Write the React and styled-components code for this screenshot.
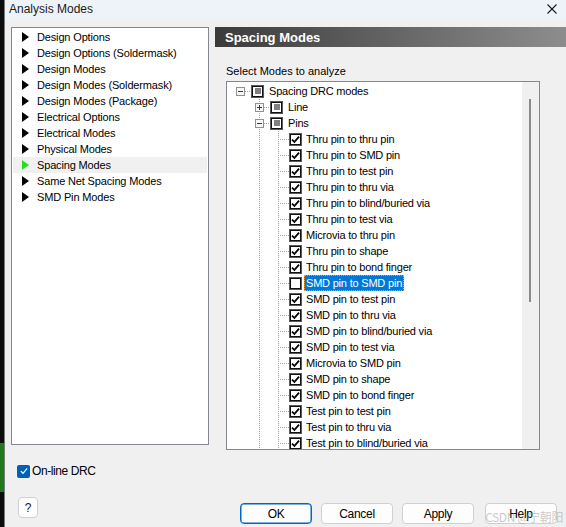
import React from 'react';
import styled, { createGlobalStyle, css } from 'styled-components';

const GlobalStyle = createGlobalStyle`
  html, body {
    margin: 0;
    padding: 0;
    background: #f0f0f0;
    overflow: hidden;
  }
  * { box-sizing: border-box; }
`;

const Screen = styled.div`
  display: flex;
  width: 566px;
  height: 527px;
  font-family: "Liberation Sans", Arial, sans-serif;
  color: #000;
`;

// dark desktop strip on the left edge, with a bit of green behind the dialog
const Edge = styled.div`
  width: 4px;
  flex-shrink: 0;
  background: linear-gradient(
    to bottom,
    #0c0c0c 0,
    #0c0c0c 443px,
    #1f7a1f 443px,
    #1f7a1f 492px,
    #0c0c0c 492px
  );
`;

const Window = styled.div`
  flex: 1;
  display: flex;
  flex-direction: column;
  border-left: 1px solid #7b7b7b;
  background: #f0f0f0;
`;

const TitleBar = styled.div`
  height: 20px;
  display: flex;
  align-items: center;
  justify-content: space-between;
  padding: 0 9px 3px 4px;
  background: #eef3f9;
`;

const Title = styled.span`
  font-size: 12px;
  color: #1a1a1a;
`;

const Body = styled.div`
  flex: 1;
  display: flex;
  flex-direction: column;
  padding-top: 7px;
  position: relative;
`;

const Main = styled.div`
  display: flex;
  align-items: flex-start;
`;

const LeftCol = styled.div`
  width: 204px;
  padding-left: 6px;
  display: flex;
  flex-direction: column;
`;

const ListBox = styled.div`
  height: 418px;
  background: #fff;
  border: 1px solid #828790;
  padding: 1px;
`;

const ListRow = styled.div`
  height: 16px;
  display: flex;
  align-items: center;
  padding-left: 9px;
  font-size: 11px;
  letter-spacing: -0.15px;
  white-space: nowrap;
  ${p => p.$selected && css`background: #f0f0f0;`}
`;

const Arrow = styled.span`
  width: 0;
  height: 0;
  border-top: 5.5px solid transparent;
  border-bottom: 5.5px solid transparent;
  border-left: 7px solid ${p => (p.$active ? '#22e022' : '#000')};
  margin-right: 8px;
`;

const OnlineRow = styled.label`
  display: flex;
  align-items: center;
  margin-top: 19px;
  margin-left: 6px;
  font-size: 12px;
  letter-spacing: -0.4px;
  gap: 2px;
`;

const WinCheck = styled.span`
  width: 13px;
  height: 13px;
  border-radius: 2px;
  background: #005fb8;
  display: flex;
  align-items: center;
  justify-content: center;
`;

const RightCol = styled.div`
  flex: 1;
  margin-left: 6px;
  display: flex;
  flex-direction: column;
`;

const Banner = styled.div`
  height: 20px;
  display: flex;
  align-items: center;
  padding-left: 10px;
  background: linear-gradient(to right, #3b3b3b, #8d8d8d);
  color: #fff;
  font-size: 13px;
  font-weight: bold;
`;

const FieldLabel = styled.div`
  margin: 17px 0 3px 11px;
  font-size: 11px;
  height: 14px;
  line-height: 14px;
`;

const TreeBox = styled.div`
  width: 314px;
  height: 369px;
  margin-left: 11px;
  border: 1px solid #828790;
  background: #fff;
  display: flex;
  overflow: hidden;
`;

const TreeRows = styled.div`
  flex: 1;
  padding-top: 1px;
  overflow: hidden;
`;

const TreeRow = styled.div`
  height: 16px;
  display: flex;
  align-items: center;
  font-size: 11px;
  letter-spacing: -0.2px;
  white-space: nowrap;
`;

const ItemLabel = styled.span`
  height: 16px;
  line-height: 15px;
  padding: 0 1px;
  margin-left: ${p => p.$gap}px;
  border: 1px solid transparent;
  ${p => p.$selected && css`
    background: #0078d7;
    color: #fff;
    border: 1px dotted #f0a030;
  `}
`;

const Box = styled.span`
  width: 13px;
  height: 13px;
  flex-shrink: 0;
  border: 1px solid #5a5a5a;
  box-shadow: inset 0 0 0 1px #111;
  background: #fff;
  display: flex;
  align-items: center;
  justify-content: center;
`;

const Partial = styled.span`
  width: 6px;
  height: 6px;
  background: #808080;
`;

const ScrollTrack = styled.div`
  width: 17px;
  flex-shrink: 0;
  background: #f0f0f0;
  padding: 17px 0 0 7px;
`;

const ScrollThumb = styled.div`
  width: 2px;
  height: 203px;
  background: #8b8b8b;
`;

const Footer = styled.div`
  display: flex;
  align-items: flex-start;
  margin-top: 19px;
  padding: 0 9px 0 13px;
`;

const QButton = styled.button`
  width: 20px;
  height: 21px;
  padding: 0;
  font-family: "Liberation Sans", Arial, sans-serif;
  font-size: 12px;
  background: #fdfdfd;
  border: 1px solid #d0d0d0;
  border-radius: 4px;
  color: #1a1a1a;
`;

const Buttons = styled.div`
  margin-left: auto;
  margin-top: 6px;
  display: flex;
  gap: 9px;
`;

const Button = styled.button`
  width: 72px;
  height: 21px;
  padding: 0;
  font-family: "Liberation Sans", Arial, sans-serif;
  font-size: 12px;
  letter-spacing: -0.3px;
  color: #000;
  background: #fdfdfd;
  border: 1px solid ${p => (p.$primary ? '#0067c0' : '#d0d0d0')};
  border-radius: 4px;
  ${p => p.$primary && css`box-shadow: inset 0 0 0 0.5px #0067c0;`}
  ${p => p.$last && css`margin-left: 2px;`}
`;

const Watermark = styled.span`
  position: absolute;
  right: 3px;
  bottom: 4px;
  font-family: "Noto Sans CJK SC", "Liberation Sans", sans-serif;
  font-size: 12px;
  line-height: 1;
  letter-spacing: -0.4px;
  color: rgba(150, 150, 150, 0.5);
  pointer-events: none;
`;

const dotted = { stroke: '#a0a0a0', strokeWidth: 1, strokeDasharray: '1 1' };

const Expander = ({ x, open }) => (
  <>
    <rect x={x + 0.5} y={4.5} width={8} height={8} fill="#f7f7f7" stroke="#919191" />
    <line x1={x + 2} y1={8.5} x2={x + 7} y2={8.5} stroke="#1f3a8a" />
    {!open && <line x1={x + 4.5} y1={6} x2={x + 4.5} y2={11} stroke="#1f3a8a" />}
  </>
);

const Lines = ({ kind, open }) => {
  if (kind === 'root') {
    return (
      <svg width="24" height="16">
        <line x1="18" y1="8.5" x2="24" y2="8.5" {...dotted} />
        <Expander x={9} open={open} />
      </svg>
    );
  }
  if (kind === 'branch') {
    return (
      <svg width="43" height="16">
        <line x1="32.5" y1="0" x2="32.5" y2="16" {...dotted} />
        <line x1="37" y1="8.5" x2="43" y2="8.5" {...dotted} />
        <Expander x={28} open={open} />
      </svg>
    );
  }
  return (
    <svg width="62" height="16">
      <line x1="32.5" y1="0" x2="32.5" y2="16" {...dotted} />
      <line x1="51.5" y1="0" x2="51.5" y2="16" {...dotted} />
      <line x1="53" y1="8.5" x2="62" y2="8.5" {...dotted} />
    </svg>
  );
};

const Check = ({ size = 11, color = '#000', width = 1.8 }) => (
  <svg width={size} height={size} viewBox="0 0 11 11">
    <path d="M2 5.6 L4.4 8 L9 2.6" fill="none" stroke={color} strokeWidth={width} />
  </svg>
);

const modes = [
  'Design Options',
  'Design Options (Soldermask)',
  'Design Modes',
  'Design Modes (Soldermask)',
  'Design Modes (Package)',
  'Electrical Options',
  'Electrical Modes',
  'Physical Modes',
  'Spacing Modes',
  'Same Net Spacing Modes',
  'SMD Pin Modes',
];

const pinChecks = [
  'Thru pin to thru pin',
  'Thru pin to SMD pin',
  'Thru pin to test pin',
  'Thru pin to thru via',
  'Thru pin to blind/buried via',
  'Thru pin to test via',
  'Microvia to thru pin',
  'Thru pin to shape',
  'Thru pin to bond finger',
  'SMD pin to SMD pin',
  'SMD pin to test pin',
  'SMD pin to thru via',
  'SMD pin to blind/buried via',
  'SMD pin to test via',
  'Microvia to SMD pin',
  'SMD pin to shape',
  'SMD pin to bond finger',
  'Test pin to test pin',
  'Test pin to thru via',
  'Test pin to blind/buried via',
];

const App = () => {
  return (
    <>
      <GlobalStyle />
      <Screen>
        <Edge />
        <Window>
          <TitleBar>
            <Title>Analysis Modes</Title>
            <svg width="10" height="10" viewBox="0 0 10 10">
              <path d="M0.5 0.5 L9.5 9.5 M9.5 0.5 L0.5 9.5" stroke="#1a1a1a" strokeWidth="1.1" />
            </svg>
          </TitleBar>

          <Body>
            <Main>
              <LeftCol>
                <ListBox>
                  {modes.map(m => (
                    <ListRow key={m} $selected={m === 'Spacing Modes'}>
                      <Arrow $active={m === 'Spacing Modes'} />
                      {m}
                    </ListRow>
                  ))}
                </ListBox>
                <OnlineRow>
                  <WinCheck>
                    <Check size={10} color="#fff" width={1.3} />
                  </WinCheck>
                  On-line DRC
                </OnlineRow>
              </LeftCol>

              <RightCol>
                <Banner>Spacing Modes</Banner>
                <FieldLabel>Select Modes to analyze</FieldLabel>
                <TreeBox>
                  <TreeRows>
                    <TreeRow>
                      <Lines kind="root" open />
                      <Box><Partial /></Box>
                      <ItemLabel $gap={3}>Spacing DRC modes</ItemLabel>
                    </TreeRow>
                    <TreeRow>
                      <Lines kind="branch" />
                      <Box><Partial /></Box>
                      <ItemLabel $gap={3}>Line</ItemLabel>
                    </TreeRow>
                    <TreeRow>
                      <Lines kind="branch" open />
                      <Box><Partial /></Box>
                      <ItemLabel $gap={3}>Pins</ItemLabel>
                    </TreeRow>
                    {pinChecks.map(p => {
                      const off = p === 'SMD pin to SMD pin';
                      return (
                        <TreeRow key={p}>
                          <Lines kind="leaf" />
                          <Box>{!off && <Check />}</Box>
                          <ItemLabel $gap={2} $selected={off}>{p}</ItemLabel>
                        </TreeRow>
                      );
                    })}
                  </TreeRows>
                  <ScrollTrack>
                    <ScrollThumb />
                  </ScrollTrack>
                </TreeBox>
              </RightCol>
            </Main>

            <Footer>
              <QButton>?</QButton>
              <Buttons>
                <Button $primary>OK</Button>
                <Button>Cancel</Button>
                <Button>Apply</Button>
                <Button $last>Help</Button>
              </Buttons>
            </Footer>
            <Watermark>CSDN @宁朝阳</Watermark>
          </Body>
        </Window>
      </Screen>
    </>
  );
};

export default App;
